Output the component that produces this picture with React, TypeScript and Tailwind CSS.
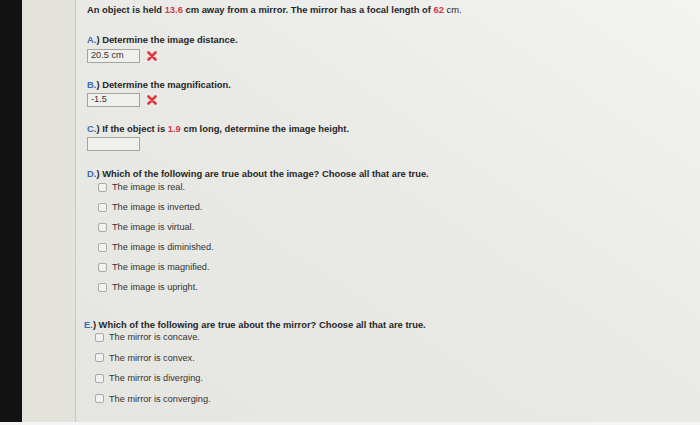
import React from "react";

const font = { fontFamily: '"Liberation Sans", Arial, sans-serif' };

function Label({ letter, children }: { letter: string; children: React.ReactNode }) {
  return (
    <div className="text-[9.4px] font-bold leading-[12px] text-[#262626]">
      <span className="text-[#3b6cb4]">{letter}.</span>) {children}
    </div>
  );
}

function Red({ children }: { children: React.ReactNode }) {
  return <span className="text-[#d23a48]">{children}</span>;
}

function WrongMark() {
  return (
    <svg width="10" height="10" viewBox="0 0 10 10" className="ml-[7px]">
      <path d="M1.5 1.5 L8.5 8.5 M8.5 1.5 L1.5 8.5" stroke="#e0343f" strokeWidth="2.6" strokeLinecap="round" />
    </svg>
  );
}

function Answer({ value, wrong }: { value?: string; wrong?: boolean }) {
  return (
    <div className="flex items-center">
      <div className="flex h-[14px] w-[53px] items-center border border-[#a3a3a0] bg-[#efefed] pl-[3px] text-[9.2px] leading-none text-[#333]">
        {value}
      </div>
      {wrong && <WrongMark />}
    </div>
  );
}

function Option({ text }: { text: string }) {
  return (
    <label className="flex h-[12px] items-center pl-[11px]">
      <span className="h-[9px] w-[9px] rounded-[2px] border border-[#a9a9a6] bg-[#f1f1ef]" />
      <span className="ml-[5px] text-[9.2px] leading-[12px] text-[#333]">{text}</span>
    </label>
  );
}

const imageOptions = [
  "The image is real.",
  "The image is inverted.",
  "The image is virtual.",
  "The image is diminished.",
  "The image is magnified.",
  "The image is upright.",
];

const mirrorOptions = [
  "The mirror is concave.",
  "The mirror is convex.",
  "The mirror is diverging.",
  "The mirror is converging.",
];

export default function App() {
  return (
    <div className="flex h-[425px] w-[700px] flex-col overflow-hidden" style={font}>
      <div className="flex flex-1">
        <div className="w-[22px] bg-[#121212]" />
        <div className="w-[54px] border-r border-[#cbcbc5] bg-[#e3e2db]" />
        <div className="flex-1 bg-linear-to-bl from-[#f3f3f2] via-[#e9e9e6] to-[#e5e5e1] pl-[11px] pt-[4px]">
          <div className="text-[9.4px] font-bold leading-[12px] text-[#262626]">
            An object is held <Red>13.6</Red> cm away from a mirror. The mirror has a focal length of{" "}
            <Red>62</Red> <span className="font-normal">cm.</span>
          </div>

          <div className="mt-[18px]">
            <Label letter="A">Determine the image distance.</Label>
            <div className="mt-[3px]">
              <Answer value="20.5 cm" wrong />
            </div>
          </div>

          <div className="mt-[16px]">
            <Label letter="B">Determine the magnification.</Label>
            <div className="mt-[2px]">
              <Answer value="-1.5" wrong />
            </div>
          </div>

          <div className="mt-[16px]">
            <Label letter="C">
              If the object is <Red>1.9</Red> cm long, determine the image height.
            </Label>
            <div className="mt-[2px]">
              <Answer />
            </div>
          </div>

          <div className="mt-[17px]">
            <Label letter="D">
              Which of the following are true about the image? Choose all that are true.
            </Label>
            <div className="mt-[1px] flex flex-col gap-[8px]">
              {imageOptions.map((o) => (
                <Option key={o} text={o} />
              ))}
            </div>
          </div>

          <div className="-ml-[3px] mt-[26px]">
            <Label letter="E">
              Which of the following are true about the mirror? Choose all that are true.
            </Label>
            <div className="flex flex-col gap-[8.5px]">
              {mirrorOptions.map((o) => (
                <Option key={o} text={o} />
              ))}
            </div>
          </div>
        </div>
      </div>
      <div className="h-[3px] bg-[#f5f5f5]" />
    </div>
  );
}
